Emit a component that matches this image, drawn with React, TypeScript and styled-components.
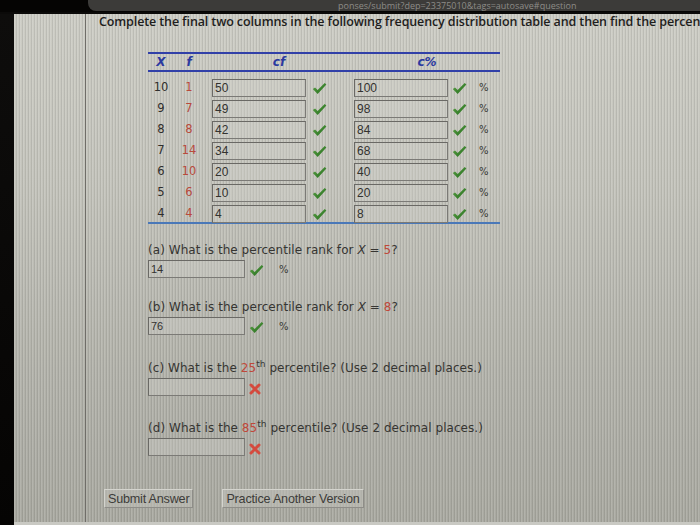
import React from "react";
import styled, { createGlobalStyle } from "styled-components";

const GlobalStyle = createGlobalStyle`
  html, body { margin: 0; padding: 0; background: #000; }
  body { width: 700px; height: 525px; overflow: hidden; }
`;

const Screen = styled.div`
  width: 700px;
  height: 525px;
  overflow: hidden;
  background: #050403;
  display: flex;
  flex-direction: column;
`;

const TopBar = styled.div`
  flex: none;
  display: flex;
  align-items: flex-start;
  padding-left: 88px;
  overflow: hidden;
  border-bottom: 2px solid #0b0a09;
  box-sizing: border-box;
  height: 14px;
`;

const UrlPill = styled.div`
  flex: 1;
  height: 11px;
  border-radius: 0 0 0 8px;
  background: #3c3b39;
  color: #8d8c88;
  font-family: "Open Sans", sans-serif;
  font-size: 9px;
  line-height: 11px;
  white-space: nowrap;
  overflow: hidden;
  padding-left: 250px;
`;

const Body = styled.div`
  flex: 1;
  display: flex;
  min-height: 0;
`;

const Bezel = styled.div`
  width: 14px;
  flex: none;
  background: linear-gradient(#0e0d0c, #050403);
`;

const Page = styled.div`
  flex: 1;
  display: flex;
  background:
    repeating-linear-gradient(90deg, rgba(255,255,255,0.10) 0 1px, rgba(0,0,0,0) 1px 2px, rgba(0,0,0,0.08) 2px 3px),
    linear-gradient(180deg, #cdcdc5 0%, #c3c3bb 35%, #b3b3ab 70%, #a9a9a1 100%);
  border-bottom: 3px solid #c9c9c3;
`;

const Gutter = styled.div`
  width: 71px;
  flex: none;
  border-right: 1px solid #6f6d68;
`;

const Content = styled.div`
  flex: 1;
  min-width: 0;
  display: flex;
  flex-direction: column;
  font-family: "DejaVu Sans", sans-serif;
  color: #2e2d2b;
`;

const Title = styled.div`
  padding-left: 13px;
  font-family: "Open Sans", sans-serif;
  font-size: 12.5px;
  font-weight: 600;
  letter-spacing: -0.12px;
  white-space: nowrap;
  overflow: hidden;
  color: #1f1e1d;
  line-height: 16px;
`;

const Table = styled.div`
  margin: 22px 0 0 62px;
  width: 352px;
  display: grid;
  grid-template-columns: 26px 30px 8px 94px 48px 94px 30px 22px;
  grid-auto-rows: 21px;
  border-top: 2px solid #3140a8;
  border-bottom: 2px solid #4a78b8;
`;

const HeadCell = styled.div<{ $span?: number }>`
  grid-column: span ${(p) => p.$span ?? 1};
  height: 16px;
  display: flex;
  align-items: center;
  justify-content: center;
  color: #2b3aa0;
  font-style: italic;
  font-weight: bold;
  font-size: 12px;
  border-bottom: 2px solid #3140a8;
`;

const NumCell = styled.div<{ $red?: boolean }>`
  display: flex;
  align-items: center;
  justify-content: center;
  padding-top: 3px;
  font-size: 11.5px;
  color: ${(p) => (p.$red ? "#b94a3c" : "#2f2e2c")};
`;

const Empty = styled.div``;

const Field = styled.div`
  width: 94px;
  height: 18px;
  box-sizing: border-box;
  border: 1px solid #7b7a76;
  border-top-color: #6a6965;
  border-left-color: #6a6965;
  background: rgba(210, 210, 204, 0.35);
  display: flex;
  align-items: center;
  padding-left: 2px;
  font-family: "Liberation Sans", "DejaVu Sans", sans-serif;
  font-size: 12px;
  color: #33322f;
  align-self: start;
  margin-top: 4px;
`;

const MarkCell = styled.div<{ $pad: number }>`
  display: flex;
  align-items: center;
  padding-left: ${(p) => p.$pad}px;
  padding-top: 6px;
`;

const Pct = styled.div`
  display: flex;
  align-items: center;
  padding-top: 3px;
  font-size: 10px;
  color: #3a3936;
  padding-left: 1px;
`;

const Question = styled.div<{ $top: number }>`
  margin: ${(p) => p.$top}px 0 0 62px;
  display: flex;
  flex-direction: column;
  gap: 2px;
`;

const QText = styled.div`
  font-size: 12px;
  letter-spacing: 0.05px;
  color: #363532;
  line-height: 16px;
  white-space: nowrap;
`;

const Var = styled.span`
  font-style: italic;
`;

const Red = styled.span`
  color: #c0483a;
`;

const Sup = styled.sup`
  font-size: 9px;
  line-height: 0;
  vertical-align: 5px;
`;

const AnswerRow = styled.div`
  display: flex;
  align-items: center;
  height: 18px;
`;

const AnswerField = styled(Field)`
  width: 97px;
  height: 18px;
  margin-top: 0;
  font-size: 11px;
  align-self: center;
`;

const AnsMark = styled.div`
  margin-left: 4px;
  width: 16px;
  display: flex;
  padding-top: 3px;
`;

const AnsPct = styled.div`
  margin-left: 14px;
  font-size: 10px;
  color: #3a3936;
`;

const Buttons = styled.div`
  margin: 33px 0 0 18px;
  display: flex;
  gap: 29px;
`;

const Button = styled.div`
  height: 19px;
  padding: 0 3px;
  box-sizing: border-box;
  display: flex;
  align-items: center;
  border: 1px solid #8e8d88;
  border-top-color: #d4d4ce;
  border-left-color: #d4d4ce;
  background: rgba(190, 190, 184, 0.6);
  font-family: "Liberation Sans", Arial, sans-serif;
  font-size: 12.6px;
  color: #3d3c39;
  letter-spacing: -0.2px;
`;

const Check = () => (
  <svg width="15" height="13" viewBox="0 0 16 14">
    <defs>
      <linearGradient id="g" x1="0" y1="0" x2="1" y2="1">
        <stop offset="0" stopColor="#5fa347" />
        <stop offset="1" stopColor="#1f6a1a" />
      </linearGradient>
    </defs>
    <path d="M0.8 7.6 L3.2 5.8 L6 8.6 L13.6 1 L15.4 2.6 L6 13 Z" fill="url(#g)" />
  </svg>
);

const Cross = () => (
  <svg width="12" height="12" viewBox="0 0 12 12">
    <path d="M2 2 L10 10 M10 2 L2 10" stroke="#d44a3e" strokeWidth="3" strokeLinecap="round" />
  </svg>
);

const rows: [number, number, number, number][] = [
  [10, 1, 50, 100],
  [9, 7, 49, 98],
  [8, 8, 42, 84],
  [7, 14, 34, 68],
  [6, 10, 20, 40],
  [5, 6, 10, 20],
  [4, 4, 4, 8],
];

export default function App() {
  return (
    <>
      <GlobalStyle />
      <Screen>
        <TopBar>
          <UrlPill>ponses/submit?dep=23375010&amp;tags=autosave#question</UrlPill>
        </TopBar>
        <Body>
          <Bezel />
          <Page>
            <Gutter />
            <Content>
              <Title>
                Complete the final two columns in the following frequency distribution table and then find the percentile ranks and percentiles.
              </Title>
              <Table>
                <HeadCell>X</HeadCell>
                <HeadCell>f</HeadCell>
                <HeadCell $span={3}>cf</HeadCell>
                <HeadCell $span={3}>c%</HeadCell>
                {rows.map(([x, f, cf, cp]) => (
                  <React.Fragment key={x}>
                    <NumCell>{x}</NumCell>
                    <NumCell $red>{f}</NumCell>
                    <Empty />
                    <Field>{cf}</Field>
                    <MarkCell $pad={6}>
                      <Check />
                    </MarkCell>
                    <Field>{cp}</Field>
                    <MarkCell $pad={4}>
                      <Check />
                    </MarkCell>
                    <Pct>%</Pct>
                  </React.Fragment>
                ))}
              </Table>
              <Question $top={18}>
                <QText>
                  (a) What is the percentile rank for <Var>X</Var> = <Red>5</Red>?
                </QText>
                <AnswerRow>
                  <AnswerField>14</AnswerField>
                  <AnsMark>
                    <Check />
                  </AnsMark>
                  <AnsPct>%</AnsPct>
                </AnswerRow>
              </Question>
              <Question $top={21}>
                <QText>
                  (b) What is the percentile rank for <Var>X</Var> = <Red>8</Red>?
                </QText>
                <AnswerRow>
                  <AnswerField>76</AnswerField>
                  <AnsMark>
                    <Check />
                  </AnsMark>
                  <AnsPct>%</AnsPct>
                </AnswerRow>
              </Question>
              <Question $top={25}>
                <QText>
                  (c) What is the <Red>25</Red>
                  <Sup>th</Sup> percentile? (Use 2 decimal places.)
                </QText>
                <AnswerRow>
                  <AnswerField />
                  <AnsMark>
                    <Cross />
                  </AnsMark>
                </AnswerRow>
              </Question>
              <Question $top={24}>
                <QText>
                  (d) What is the <Red>85</Red>
                  <Sup>th</Sup> percentile? (Use 2 decimal places.)
                </QText>
                <AnswerRow>
                  <AnswerField />
                  <AnsMark>
                    <Cross />
                  </AnsMark>
                </AnswerRow>
              </Question>
              <Buttons>
                <Button>Submit Answer</Button>
                <Button>Practice Another Version</Button>
              </Buttons>
            </Content>
          </Page>
        </Body>
      </Screen>
    </>
  );
}
